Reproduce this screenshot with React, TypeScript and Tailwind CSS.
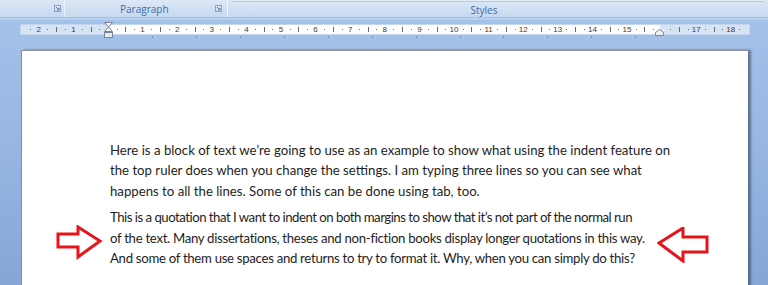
import React from "react";

const CM = 34.6;
const ZERO = 88; // ruler-local x of 0 cm (page x 108)

// tick marks on the ruler, in quarter centimetres from -2.5 to 18.5
const ticks: { x: number; kind: "num" | "half" | "dot"; label?: string }[] = [];
for (let q = -10; q <= 74; q++) {
  const x = ZERO + (q * CM) / 4;
  if (x < 2 || x > 728) continue;
  if (q === 0 || q === 64) continue;
  if (q % 4 === 0) ticks.push({ x, kind: "num", label: String(Math.abs(q / 4)) });
  else if (q % 2 === 0) ticks.push({ x, kind: "half" });
  else ticks.push({ x, kind: "dot" });
}
const tabs: number[] = [];
for (let t = 1; t <= 12; t++) tabs.push(ZERO + t * 1.27 * CM);

function Launcher() {
  return (
    <svg width="7" height="7" viewBox="0 0 7 7" className="shrink-0">
      <rect x="0.5" y="0.5" width="6" height="6" fill="none" stroke="#8aa3c4" />
      <path d="M2 2 L5 5 M3 5 H5 V3" stroke="#5b7aa6" fill="none" />
    </svg>
  );
}

export default function App() {
  return (
    <div
      className="relative h-[285px] w-[768px] overflow-hidden bg-gradient-to-b from-[#a5c3ea] via-[#97b6e2] to-[#86a6d8]"
      style={{ fontFamily: "Lato, 'Noto Sans', sans-serif" }}
    >
      {/* Ribbon group captions */}
      <div className="flex h-[18px] border-b border-[#a9c1e0] bg-gradient-to-b from-[#dde8f6] to-[#c6d9f0]">
        <div className="flex w-[65px] items-center justify-end border-r border-[#e9f1fa] pr-[3px]">
          <Launcher />
        </div>
        <div className="flex w-[163px] items-center border-r border-[#eef4fb] pl-[55px] pr-[5px]">
          <span className="flex-1 text-[10px] leading-none text-[#3f6cab]" style={{ fontFamily: "'Open Sans', sans-serif" }}>
            Paragraph
          </span>
          <Launcher />
        </div>
        <div className="flex flex-1 flex-col">
          <div className="mx-[3px] h-[2px] border-b border-[#b5cae6] bg-[#e3edf8]" />
          <div className="flex flex-1 items-center justify-center pr-[28px]">
            <span className="text-[10px] leading-none text-[#3f6cab]" style={{ fontFamily: "'Open Sans', sans-serif" }}>
              Styles
            </span>
          </div>
        </div>
      </div>
      <div className="h-[2px] bg-[#b8cfee]" />

      {/* Ruler */}
      <div className="relative ml-[20px] mt-[4px] h-[11px] w-[730px]">
        <div className="absolute inset-0 flex overflow-hidden rounded-[1px] border border-[#c4d5ec]">
          <div className="w-[88px] bg-[#d6e3f4]" />
          <div className="w-[551px] bg-white" />
          <div className="flex-1 bg-[#d6e3f4]" />
        </div>
        {ticks.map((t, i) =>
          t.kind === "num" ? (
            <span
              key={i}
              className="absolute top-[1px] -translate-x-1/2 text-[8px] leading-[9px] text-[#3c3c3c]"
              style={{ left: t.x, fontFamily: "'Liberation Sans', sans-serif" }}
            >
              {t.label}
            </span>
          ) : t.kind === "half" ? (
            <span key={i} className="absolute top-[3px] h-[5px] w-px bg-[#6b6b6b]" style={{ left: t.x }} />
          ) : (
            <span key={i} className="absolute top-[5px] h-px w-px bg-[#6b6b6b]" style={{ left: t.x }} />
          )
        )}
        {tabs.map((x, i) => (
          <span key={i} className="absolute top-[12px] h-[2px] w-px bg-[#7d8ea6]" style={{ left: x }} />
        ))}
        {/* left indent hourglass */}
        <svg width="9" height="16" viewBox="0 0 9 16" className="absolute -top-[2px] left-[84px]">
          <path d="M0.5 0.5 H8.5 L4.5 5 Z" fill="#f4f6f9" stroke="#7b8595" />
          <path d="M4.5 5 L8.5 9.5 H0.5 Z" fill="#f4f6f9" stroke="#7b8595" />
          <rect x="0.5" y="10.5" width="8" height="5" fill="#e6eaef" stroke="#7b8595" />
        </svg>
        {/* right indent */}
        <svg width="9" height="7" viewBox="0 0 9 7" className="absolute left-[635px] top-[5px]">
          <path d="M0.5 6.5 V3.5 L4.5 0.5 L8.5 3.5 V6.5 Z" fill="#eef1f5" stroke="#7b8595" />
        </svg>
      </div>

      {/* Page */}
      <div className="ml-[21px] mt-[15px] h-[300px] w-[727px] border-l border-t border-[#8a8f96] bg-white shadow-[3px_0_2px_rgba(50,60,80,0.55)]">
        <div className="pl-[88px] pt-[89px] text-[13.2px] leading-[20.3px] text-[#1e1e24]">
          <p className="mb-[6.5px] whitespace-nowrap">
            Here is a block of text we’re going to use as an example to show what using the indent feature on
            <br />
            the top ruler does when you change the settings. I am typing three lines so you can see what
            <br />
            happens to all the lines. Some of this can be done using tab, too.
          </p>
          <p className="whitespace-nowrap">
            <span className="block tracking-[-0.5px]">
              This is a quotation that I want to indent on both margins to show that it’s not part of the normal run
            </span>
            <span className="block tracking-[-0.3px]">
              of the text. Many dissertations, theses and non-fiction books display longer quotations in this way.
            </span>
            <span className="block tracking-[-0.3px]">
              And some of them use spaces and returns to try to format it. Why, when you can simply do this?
            </span>
          </p>
        </div>
      </div>

      {/* Annotation arrows */}
      <svg width="52" height="36" viewBox="0 0 52 36" className="absolute left-[56px] top-[225px]">
        <path d="M2 9 H22 V2 L44 16 L22 32 V22 H2 Z" fill="none" stroke="#e8141c" strokeWidth="3" />
      </svg>
      <svg width="52" height="36" viewBox="0 0 52 36" className="absolute left-[657px] top-[227px]">
        <path d="M2 16 L26 1 V10 H50 V25 H26 V34 Z" fill="none" stroke="#e8141c" strokeWidth="3" />
      </svg>
    </div>
  );
}
